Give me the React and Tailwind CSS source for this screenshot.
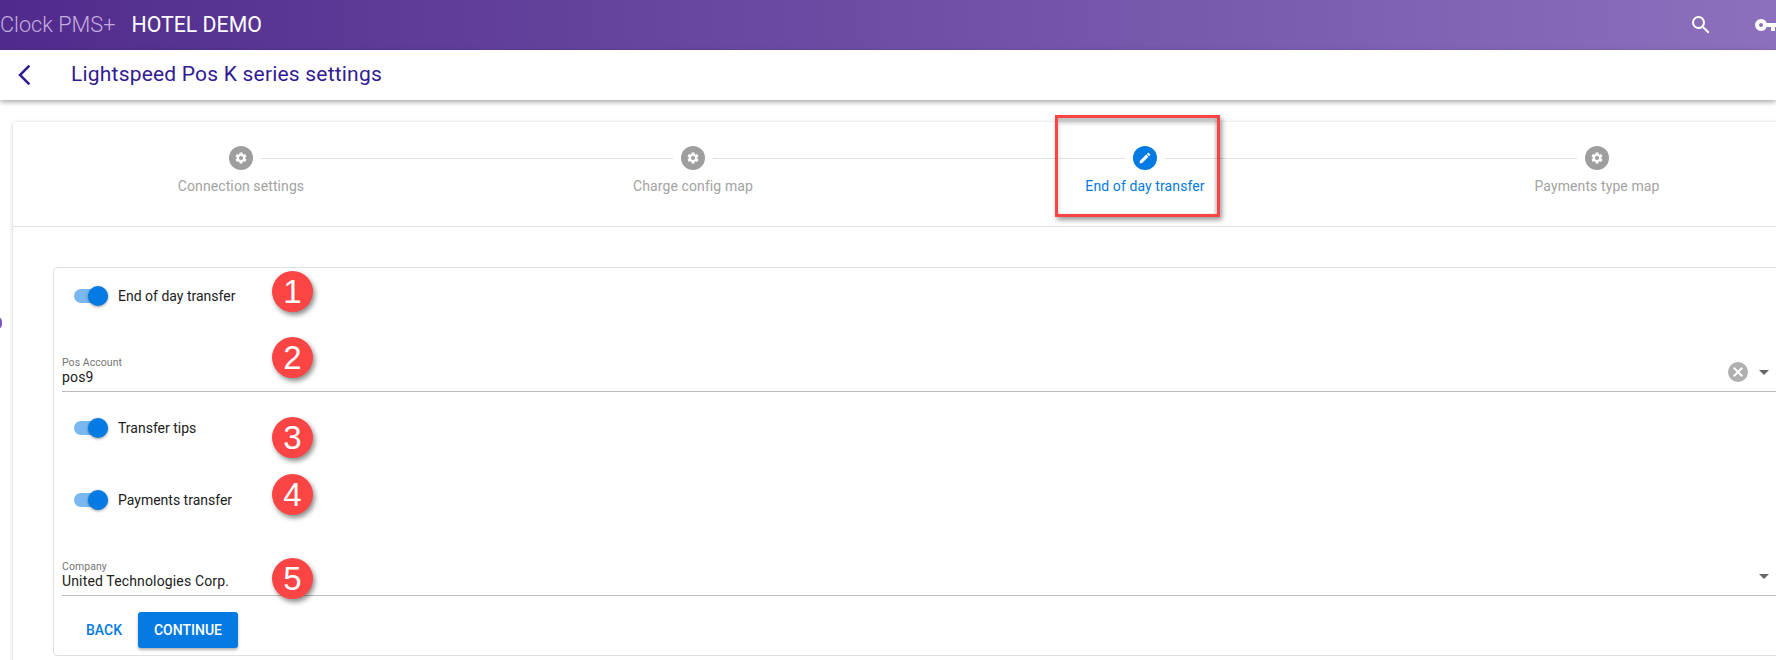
import React from 'react';

const gear = 'M19.14 12.94c.04-.3.06-.61.06-.94s-.02-.64-.07-.94l2.03-1.58a.49.49 0 0 0 .12-.61l-1.92-3.32a.49.49 0 0 0-.59-.22l-2.39.96a7.03 7.03 0 0 0-1.62-.94l-.36-2.54a.48.48 0 0 0-.48-.41h-3.84a.48.48 0 0 0-.47.41l-.36 2.54c-.59.24-1.13.57-1.62.94l-2.39-.96a.49.49 0 0 0-.59.22L2.74 8.87a.48.48 0 0 0 .12.61l2.03 1.58c-.05.3-.09.63-.09.94s.02.64.07.94l-2.03 1.58a.49.49 0 0 0-.12.61l1.92 3.32c.12.22.37.29.59.22l2.39-.96c.5.38 1.03.7 1.62.94l.36 2.54c.05.24.24.41.48.41h3.84c.24 0 .44-.17.47-.41l.36-2.54c.59-.24 1.13-.56 1.62-.94l2.39.96c.22.08.47 0 .59-.22l1.92-3.32a.49.49 0 0 0-.12-.61l-2.01-1.58zM12 15.6a3.6 3.6 0 1 1 0-7.2 3.6 3.6 0 0 1 0 7.2z';
const pencil = 'M3 17.25V21h3.75L17.81 9.94l-3.75-3.75L3 17.25zM20.71 7.04a1 1 0 0 0 0-1.41l-2.34-2.34a1 1 0 0 0-1.41 0l-1.83 1.83 3.75 3.75 1.83-1.83z';

const steps = [
  { label: 'Connection settings', icon: gear },
  { label: 'Charge config map', icon: gear },
  { label: 'End of day transfer', icon: pencil, active: true },
  { label: 'Payments type map', icon: gear },
];

function Step({ step, last }) {
  return (
    <div className="relative flex flex-col items-center pt-[24px]">
      <div className={`w-[24px] h-[24px] rounded-full flex items-center justify-center ${step.active ? 'bg-[#047ae3]' : 'bg-[#9e9e9e]'}`}>
        <svg viewBox="0 0 24 24" className="w-[14px] h-[14px] fill-white"><path d={step.icon} /></svg>
      </div>
      <div className={`mt-[7px] text-[14px] leading-[18px] tracking-[0.1px] ${step.active ? 'text-[#047ae3]' : 'text-[#a3a3a3]'}`}>{step.label}</div>
      {!last && <div className="absolute top-[36px] left-[246px] w-[412px] h-px bg-[#e0e0e0]" />}
    </div>
  );
}

function Toggle({ label, className }) {
  return (
    <div className={`flex items-center ml-[20px] ${className}`}>
      <div className="relative w-[34px] h-[14px] rounded-full bg-[#7bb8f0]">
        <div className="absolute right-0 top-[-3px] w-[20px] h-[20px] rounded-full bg-[#047ae3] shadow-[0_1px_3px_rgba(0,0,0,0.4)]" />
      </div>
      <span className="ml-[10px] text-[14px] text-[#212121]">{label}</span>
    </div>
  );
}

function Field({ label, value, clear, className }) {
  return (
    <div className={`relative ml-[8px] border-b border-[#bdbdbd] ${className}`}>
      <div className="text-[10.5px] leading-[12px] tracking-[0.05px] text-[#757575]">{label}</div>
      <div className="text-[14px] leading-[16px] tracking-[0.15px] text-[#212121]">{value}</div>
      <div className="absolute top-[3px] left-[1664px] flex items-center">
        {clear ? (
          <svg viewBox="0 0 24 24" className="w-[24px] h-[24px] fill-[#b0b0b0]">
            <path d="M12 2a10 10 0 1 0 0 20 10 10 0 0 0 0-20zm5 13.59L15.59 17 12 13.41 8.41 17 7 15.59 10.59 12 7 8.41 8.41 7 12 10.59 15.59 7 17 8.41 13.41 12 17 15.59z" />
          </svg>
        ) : (
          <div className="w-[24px] h-[24px]" />
        )}
        <div className="ml-[9px] w-0 h-0 border-x-[5px] border-x-transparent border-t-[5px] border-t-[#666666]" />
      </div>
    </div>
  );
}

function Badge({ n, className }) {
  return (
    <div className={`absolute left-[272px] w-[41px] h-[41px] rounded-full bg-[#fb4444] text-white text-[33px] font-['Liberation_Sans',sans-serif] flex items-center justify-center shadow-[2px_3px_5px_rgba(0,0,0,0.45)] ${className}`}>
      {n}
    </div>
  );
}

export default function App() {
  return (
    <div className="relative w-[1776px] h-[660px] overflow-hidden bg-white font-['Roboto',sans-serif]">
      {/* Top bar */}
      <div className="h-[50px] flex items-center bg-gradient-to-r from-[#512b8c] to-[#8c70bd] text-white">
        <span className="text-[21.7px] font-light text-[#c3acdf]">Clock PMS+</span>
        <span className="ml-[16px] text-[21.3px]">HOTEL DEMO</span>
        <div className="ml-auto flex items-center">
          <svg viewBox="0 0 24 24" className="w-[24px] h-[24px] fill-white shrink-0">
            <path d="M15.5 14h-.79l-.28-.27A6.47 6.47 0 0 0 16 9.5 6.5 6.5 0 1 0 9.5 16c1.61 0 3.09-.59 4.23-1.57l.27.28v.79l5 4.99L20.49 19l-4.99-5zm-6 0a4.5 4.5 0 1 1 0-9 4.5 4.5 0 0 1 0 9z" />
          </svg>
          <svg viewBox="0 0 24 24" className="ml-[41px] mr-[-2px] w-[24px] h-[24px] fill-white shrink-0">
            <path d="M12.65 10A6 6 0 0 0 7 6a6 6 0 0 0 0 12 6 6 0 0 0 5.65-4H17v4h4v-4h2v-4H12.65zM7 14a2 2 0 1 1 0-4 2 2 0 0 1 0 4z" />
          </svg>
        </div>
      </div>

      {/* Title bar */}
      <div className="relative h-[50px] flex items-center bg-white shadow-[0_2px_5px_rgba(0,0,0,0.35)]">
        <svg viewBox="0 0 24 24" className="ml-[10px] w-[30px] h-[30px] fill-none stroke-[#311b92] stroke-2"><path d="M15.5 4.5 8 12l7.5 7.5" /></svg>
        <span className="ml-[31px] text-[21px] tracking-[0.2px] text-[#311b92]">Lightspeed Pos K series settings</span>
      </div>

      <div className="absolute left-[-7px] top-[317px] w-[9px] h-[12px] rounded-full border-2 border-[#7e57c2]" />

      {/* Stepper card */}
      <div className="ml-[13px] mt-[22px] w-[1820px] rounded-[3px] bg-white shadow-[0_1px_4px_rgba(0,0,0,0.22)]">
        <div className="h-[105px] grid grid-cols-[repeat(4,452px)] pl-[2px] border-b border-[#e0e0e0]">
          {steps.map((step, i) => (
            <Step key={step.label} step={step} last={i === steps.length - 1} />
          ))}
        </div>

        <div className="px-[40px] pt-[40px] pb-[20px]">
          <div className="relative h-[389px] rounded-[4px] border border-[#e0e0e0]">
            <Toggle label="End of day transfer" className="pt-[18px] h-[38px]" />
            <Field label="Pos Account" value="pos9" clear className="mt-[51px] pb-[6px]" />
            <Toggle label="Transfer tips" className="mt-[26px] h-[20px]" />
            <Toggle label="Payments transfer" className="mt-[52px] h-[20px]" />
            <Field label="Company" value="United Technologies Corp." className="mt-[51px] pb-[6px]" />
            <div className="mt-[16px] ml-[26px] flex items-center">
              <button className="w-[48px] h-[36px] text-[14px] font-medium text-[#047ae3]">BACK</button>
              <button className="ml-[10px] w-[100px] h-[36px] rounded-[3px] bg-[#047ae3] text-[14px] font-medium text-white shadow-[0_2px_3px_rgba(0,0,0,0.3)]">CONTINUE</button>
            </div>
          </div>
        </div>
      </div>

      {/* Annotations */}
      <div className="absolute left-[1055px] top-[115px] w-[165px] h-[102px] border-[3px] border-[#fb4444] shadow-[2px_3px_5px_rgba(0,0,0,0.4),inset_0_5px_4px_rgba(0,0,0,0.22),inset_-2px_0_3px_rgba(0,0,0,0.12)]" />
      <Badge n="1" className="top-[271px]" />
      <Badge n="2" className="top-[337px]" />
      <Badge n="3" className="top-[417px]" />
      <Badge n="4" className="top-[474px]" />
      <Badge n="5" className="top-[558px]" />
    </div>
  );
}
